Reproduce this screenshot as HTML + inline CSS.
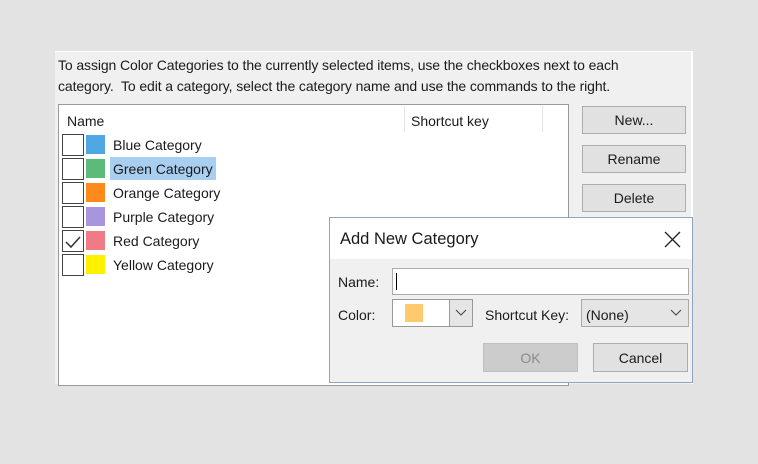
<!DOCTYPE html>
<html><head><style>
*{margin:0;padding:0;box-sizing:border-box}
body{width:758px;height:464px;background:#e3e3e3;font-family:"Liberation Sans",sans-serif;font-size:14px;color:#1a1a1a;position:relative;overflow:hidden}
.a{position:absolute}
.btn{position:absolute;background:#e1e1e1;border:1px solid #adadad;text-align:center;line-height:27px}
.cb{position:absolute;left:62px;width:22px;height:22px;border:1px solid #444;background:#fff}
.sw{position:absolute;left:86px;width:19px;height:19px}
.t{position:absolute;left:113px}
</style></head><body>
<div class="a" style="left:55px;top:51px;width:638px;height:333px;background:#f0f0f0;border-top:1px solid #fff;border-right:2px solid #fff"></div>
<div class="a" style="left:58px;top:55px;line-height:21px;width:640px;letter-spacing:-0.1px">To assign Color Categories to the currently selected items, use the checkboxes next to each<br>category.&nbsp; To edit a category, select the category name and use the commands to the right.</div>
<div class="a" style="left:58px;top:104px;width:511px;height:282px;background:#fff;border:1px solid #9a9a9a"></div>
<div class="a" style="left:67px;top:113px">Name</div>
<div class="a" style="left:404px;top:106px;width:1px;height:26px;background:#e5e5e5"></div>
<div class="a" style="left:542px;top:106px;width:1px;height:26px;background:#e5e5e5"></div>
<div class="a" style="left:411px;top:113px">Shortcut key</div>

<div class="cb" style="top:134px"></div><div class="sw" style="top:135px;background:#4fa8e3"></div><div class="t" style="top:137px">Blue Category</div>
<div class="a" style="left:110px;top:157px;width:106px;height:23px;background:#a8cef0"></div>
<div class="cb" style="top:158px"></div><div class="sw" style="top:159px;background:#5dbb7a"></div><div class="t" style="top:161px">Green Category</div>
<div class="cb" style="top:182px"></div><div class="sw" style="top:183px;background:#ff8a1c"></div><div class="t" style="top:185px">Orange Category</div>
<div class="cb" style="top:206px"></div><div class="sw" style="top:207px;background:#a995de"></div><div class="t" style="top:209px">Purple Category</div>
<div class="cb" style="top:230px"><svg width="20" height="20" style="position:absolute;left:0;top:0"><path d="M3 11 L8 16 L17 6" stroke="#333" stroke-width="1.5" fill="none"/></svg></div><div class="sw" style="top:231px;background:#f07a85"></div><div class="t" style="top:233px">Red Category</div>
<div class="cb" style="top:254px"></div><div class="sw" style="top:255px;background:#fff000"></div><div class="t" style="top:257px">Yellow Category</div>

<div class="btn" style="left:582px;top:106px;width:104px;height:28px">New...</div>
<div class="btn" style="left:582px;top:145px;width:104px;height:28px">Rename</div>
<div class="btn" style="left:582px;top:184px;width:104px;height:28px">Delete</div>

<div class="a" style="left:329px;top:217px;width:364px;height:166px;background:#f0f0f0;border:1px solid #8ea4c0"></div>
<div class="a" style="left:330px;top:218px;width:362px;height:41px;background:#fff"></div>
<div class="a" style="left:340px;top:230px;font-size:16.5px">Add New Category</div>
<svg class="a" style="left:664px;top:231px" width="17" height="17"><path d="M1 1L16 16M16 1L1 16" stroke="#222" stroke-width="1.3"/></svg>
<div class="a" style="left:338px;top:274px">Name:</div>
<div class="a" style="left:392px;top:268px;width:297px;height:27px;background:#fff;border:1px solid #aaa"></div>
<div class="a" style="left:396px;top:273px;width:1px;height:17px;background:#000"></div>
<div class="a" style="left:338px;top:307px">Color:</div>
<div class="a" style="left:392px;top:299px;width:81px;height:28px;background:#fff;border:1px solid #999"></div>
<div class="a" style="left:405px;top:304px;width:18px;height:18px;background:#ffc96e"></div>
<div class="a" style="left:449px;top:300px;width:23px;height:26px;background:#e5e5e5;border-left:1px solid #999"></div>
<svg class="a" style="left:455px;top:309px" width="12" height="8"><path d="M1 1L6 6L11 1" stroke="#444" fill="none"/></svg>
<div class="a" style="left:485px;top:307px">Shortcut Key:</div>
<div class="a" style="left:581px;top:299px;width:108px;height:28px;background:#e5e5e5;border:1px solid #aaa"></div>
<div class="a" style="left:586px;top:307px">(None)</div>
<svg class="a" style="left:670px;top:309px" width="12" height="8"><path d="M1 1L6 6L11 1" stroke="#444" fill="none"/></svg>
<div class="btn" style="left:483px;top:343px;width:95px;height:29px;background:#cccccc;border-color:#bfbfbf;color:#8a8a8a;line-height:28px">OK</div>
<div class="btn" style="left:593px;top:343px;width:95px;height:29px;line-height:28px">Cancel</div>
</body></html>
